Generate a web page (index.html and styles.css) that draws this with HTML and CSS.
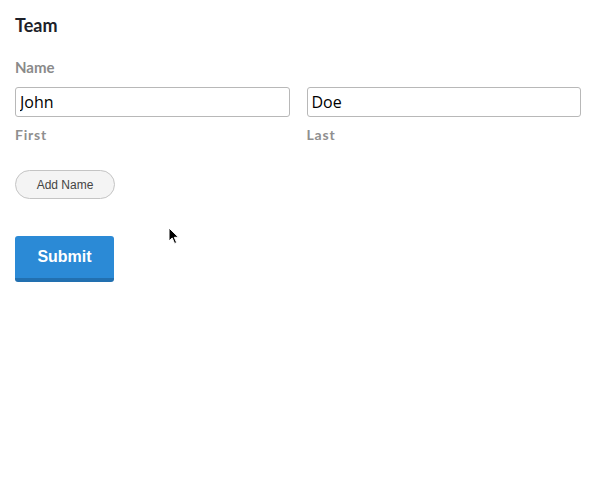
FILE: index.html
```html
<!DOCTYPE html>
<html>
    <head>
        <title>Team</title>
        <link rel="stylesheet" href="styles.css">
    </head>
    <body>
        <form class="team-form">
            <h3 class="form-title">Team</h3>

            <div class="field">
                <label class="field-label">Name</label>
                <div class="name-row">
                    <div class="name-part">
                        <input type="text" class="text-input" value="John">
                        <span class="sub-label">First</span>
                    </div>
                    <div class="name-part">
                        <input type="text" class="text-input" value="Doe">
                        <span class="sub-label">Last</span>
                    </div>
                </div>
            </div>

            <button type="button" class="add-btn">Add Name</button>

            <div class="submit-row">
                <button type="button" class="submit-btn">Submit</button>
            </div>
        </form>

        <!-- mouse pointer -->
        <svg class="cursor" width="12" height="18" viewBox="0 0 12 18">
            <path d="M1 1 L1 14 L4.2 11 L6.6 16.5 L8.6 15.6 L6.3 10.3 L10.5 10.3 Z" fill="#000" stroke="#fff" stroke-width="1"/>
        </svg>
    </body>
</html>
```

FILE: styles.css
```css
body {
    margin: 0;
    background: #fff;
    font-family: Lato, "Open Sans", sans-serif;
}
.team-form {
    padding: 15px 23px 0 15px;
}
.form-title {
    margin: 0;
    font-size: 18px;
    font-weight: bold;
    color: #1d2129;
    line-height: 20px;
}
.field {
    margin-top: 23px;
}
.field-label {
    display: block;
    font-size: 15px;
    font-weight: bold;
    color: #8a8a8a;
    line-height: 18px;
}
.name-row {
    display: flex;
    gap: 17px;
    margin-top: 11px;
}
.name-part {
    flex: 1;
}
.text-input {
    display: block;
    box-sizing: border-box;
    width: 100%;
    height: 30px;
    padding: 0 4px;
    border: 1px solid #b8b8b8;
    border-radius: 3px;
    font-family: "Open Sans", Lato, sans-serif;
    font-size: 16px;
    color: #000;
}
.sub-label {
    display: block;
    margin-top: 10px;
    font-size: 14px;
    font-weight: bold;
    letter-spacing: 0.8px;
    color: #8f8f8f;
    line-height: 16px;
}
.add-btn {
    display: block;
    margin-top: 27px;
    width: 100px;
    height: 29px;
    border: 1px solid #c4c4c4;
    border-radius: 15px;
    background: #f4f4f4;
    color: #444;
    font-family: "Liberation Sans", Arial, sans-serif;
    font-size: 12px;
}
.submit-row {
    margin-top: 37px;
}
.submit-btn {
    width: 99px;
    height: 46px;
    border: none;
    border-bottom: 4px solid #2270b0;
    border-radius: 3px;
    background: #2b8ad6;
    color: #fff;
    font-family: "Liberation Sans", Arial, sans-serif;
    font-size: 16px;
    font-weight: bold;
}
.cursor {
    position: absolute;
    left: 168px;
    top: 227px;
}
```
